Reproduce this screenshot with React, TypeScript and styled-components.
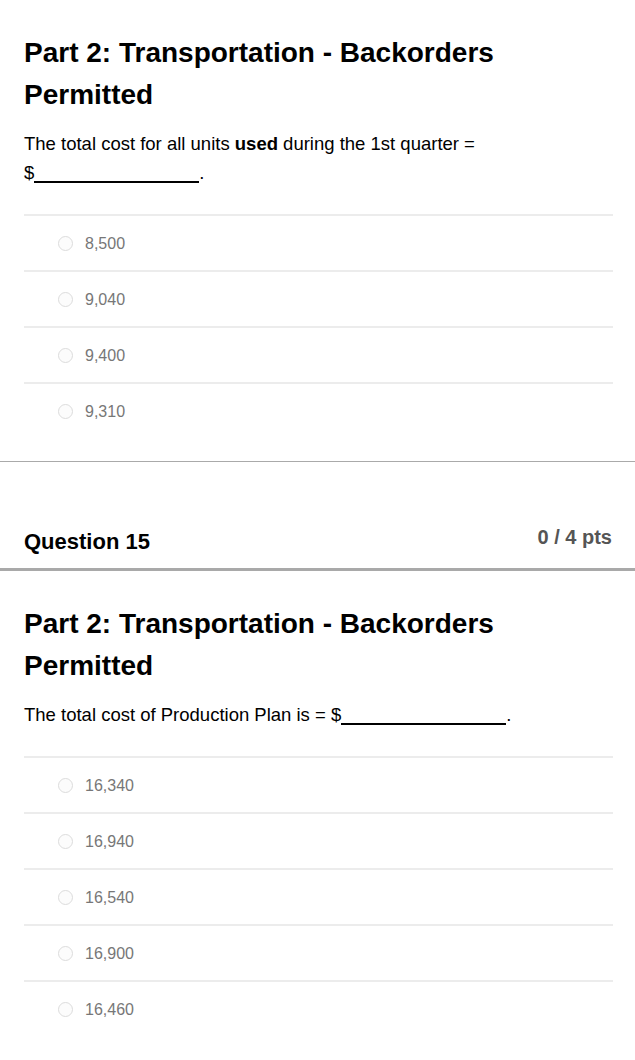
import React from 'react';
import styled, { createGlobalStyle } from 'styled-components';

const GlobalStyle = createGlobalStyle`
	body {
		margin: 0;
		background: #fff;
		font-family: 'Liberation Sans', Arial, sans-serif;
		color: #000;
	}
`;

const Page = styled.div`
	width: 635px;
	display: flex;
	flex-direction: column;
`;

const QuestionBody = styled.section<{ $bottom?: number }>`
	padding: 32px 22px ${(p) => p.$bottom ?? 0}px 24px;
`;

const Title = styled.h2`
	margin: 0;
	font-size: 28px;
	line-height: 42px;
	font-weight: bold;
`;

const Prompt = styled.p`
	margin: 13px 0 27px;
	font-size: 18.5px;
	line-height: 29px;
	& b {
		font-weight: bold;
	}
`;

const Fill = styled.span`
	white-space: nowrap;
`;

const Blank = styled.span`
	display: inline-block;
	width: 165px;
	height: 18px;
	border-bottom: 2px solid #000;
	vertical-align: baseline;
	margin-bottom: -4px;
`;

const Answers = styled.ul`
	list-style: none;
	margin: 0;
	padding: 0;
	border-top: 2px solid #ececec;
`;

const Answer = styled.li<{ $last?: boolean }>`
	height: 56px;
	box-sizing: border-box;
	padding: 1px 0 0 34px;
	display: flex;
	align-items: center;
	border-bottom: 2px solid ${(p) => (p.$last ? 'transparent' : '#ececec')};
`;

const Radio = styled.span`
	width: 13px;
	height: 13px;
	border-radius: 50%;
	border: 1px solid #dcdcdc;
	background: #fcfcfc;
	margin-right: 12px;
`;

const AnswerText = styled.span`
	font-size: 16px;
	color: #777;
`;

const Divider = styled.hr`
	margin: 0;
	border: 0;
	border-top: 1px solid #aaa;
`;

const QuestionHeader = styled.header`
	display: flex;
	justify-content: space-between;
	align-items: flex-end;
	height: 94px;
	box-sizing: border-box;
	margin-top: 15px;
	padding: 0 23px 13px 24px;
	border-bottom: 3px solid #a9a9a9;
`;

const QuestionName = styled.h3`
	margin: 0;
	font-size: 22px;
	font-weight: bold;
`;

const Points = styled.span`
	font-size: 20px;
	font-weight: bold;
	color: #555;
	margin-bottom: 6px;
`;

const first = ['8,500', '9,040', '9,400', '9,310'];
const second = ['16,340', '16,940', '16,540', '16,900', '16,460'];

const AnswerList = ({ items }: { items: string[] }) => (
	<Answers>
		{items.map((a, i) => (
			<Answer key={a} $last={i === items.length - 1}>
				<Radio />
				<AnswerText>{a}</AnswerText>
			</Answer>
		))}
	</Answers>
);

const Heading = () => (
	<Title>
		Part 2: Transportation - Backorders
		<br />
		Permitted
	</Title>
);

const App = () => (
	<Page>
		<GlobalStyle />
		<QuestionBody $bottom={21}>
			<Heading />
			<Prompt>
				The total cost for all units <b>used</b> during the 1st quarter ={' '}
				<Fill>
					$<Blank />.
				</Fill>
			</Prompt>
			<AnswerList items={first} />
		</QuestionBody>
		<Divider />
		<QuestionHeader>
			<QuestionName>Question 15</QuestionName>
			<Points>0 / 4 pts</Points>
		</QuestionHeader>
		<QuestionBody>
			<Heading />
			<Prompt>
				The total cost of Production Plan is ={' '}
				<Fill>
					$<Blank />.
				</Fill>
			</Prompt>
			<AnswerList items={second} />
		</QuestionBody>
	</Page>
);

export default App;
